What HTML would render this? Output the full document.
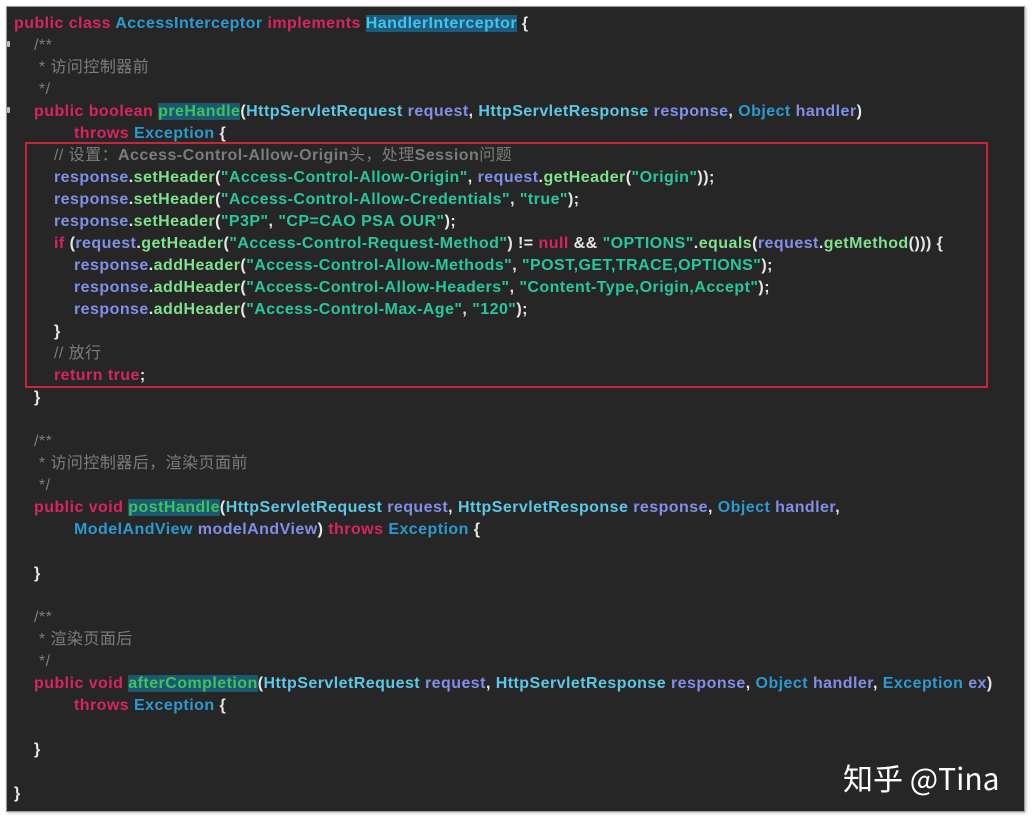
<!DOCTYPE html>
<html><head><meta charset="utf-8"><style>
body{margin:0;background:#fff;width:1036px;height:823px;overflow:hidden;position:relative}
.frame{position:absolute;left:6px;top:6px;width:1017px;height:804px;background:#262626;border:1px solid #9a9a9a;box-shadow:1px 1px 3px #bbb}
.l{position:absolute;white-space:pre;font:bold 16px "Liberation Sans","Noto Sans CJK SC",sans-serif;color:#e6e6e6;height:22px;line-height:22px;letter-spacing:0.45px;margin-top:2px}
.k{color:#d9245f}.t{color:#2a9ad0}.v{color:#8090e8}.m{color:#7ee28e}.s{color:#27c79d}.c{color:#7c7c7c;font-weight:normal}.c b{font-weight:bold}
.h1{background:#1b5c7c;color:#42c3f0}.h2{background:#1c5870;color:#3dc35c}
.box{position:absolute;left:25px;top:142px;width:959px;height:242px;border:2px solid #c8243a}
.dot{position:absolute;left:7px;width:3px;height:6px;background:#bbb;border-radius:1px}
.wm{position:absolute;left:843px;top:757px;font:30px "Noto Sans CJK SC","Liberation Sans",sans-serif;color:#fff;line-height:40px}
</style></head><body>
<div class="frame"></div>
<div class="box"></div>
<div class="dot" style="top:41px"></div><div class="dot" style="top:107px"></div>
<div class="l" style="left:14px;top:11px"><span class="k">public class </span><span class="t">AccessInterceptor </span><span class="k">implements </span><span class="h1">HandlerInterceptor</span> {</div>
<div class="l c" style="left:34px;top:33px">/**</div>
<div class="l c" style="left:34px;top:55px"> * 访问控制器前</div>
<div class="l c" style="left:34px;top:77px"> */</div>
<div class="l" style="left:34px;top:99px"><span class="k">public boolean </span><span class="h2">preHandle</span>(<span class="t" style="color:#5cc8e8">HttpServletRequest </span><span class="v">request</span>, <span class="t" style="color:#5cc8e8">HttpServletResponse </span><span class="v">response</span>, <span class="t">Object </span><span class="v">handler</span>)</div>
<div class="l" style="left:74px;top:121px"><span class="k">throws </span><span class="t">Exception</span> {</div>
<div class="l c" style="left:54px;top:143px">// 设置：<b>Access-Control-Allow-Origin</b>头，处理<b>Session</b>问题</div>
<div class="l" style="left:54px;top:165px"><span class="v">response</span>.<span class="m">setHeader</span>(<span class="s">"Access-Control-Allow-Origin"</span>, <span class="v">request</span>.<span class="m">getHeader</span>(<span class="s">"Origin"</span>));</div>
<div class="l" style="left:54px;top:187px"><span class="v">response</span>.<span class="m">setHeader</span>(<span class="s">"Access-Control-Allow-Credentials"</span>, <span class="s">"true"</span>);</div>
<div class="l" style="left:54px;top:209px"><span class="v">response</span>.<span class="m">setHeader</span>(<span class="s">"P3P"</span>, <span class="s">"CP=CAO PSA OUR"</span>);</div>
<div class="l" style="left:54px;top:231px"><span class="k">if</span> (<span class="v">request</span>.<span class="m">getHeader</span>(<span class="s">"Access-Control-Request-Method"</span>) != <span class="k">null</span> &amp;&amp; <span class="s">"OPTIONS"</span>.<span class="m">equals</span>(<span class="v">request</span>.<span class="m">getMethod</span>())) {</div>
<div class="l" style="left:74px;top:253px"><span class="v">response</span>.<span class="m">addHeader</span>(<span class="s">"Access-Control-Allow-Methods"</span>, <span class="s">"POST,GET,TRACE,OPTIONS"</span>);</div>
<div class="l" style="left:74px;top:275px"><span class="v">response</span>.<span class="m">addHeader</span>(<span class="s">"Access-Control-Allow-Headers"</span>, <span class="s">"Content-Type,Origin,Accept"</span>);</div>
<div class="l" style="left:74px;top:297px"><span class="v">response</span>.<span class="m">addHeader</span>(<span class="s">"Access-Control-Max-Age"</span>, <span class="s">"120"</span>);</div>
<div class="l" style="left:54px;top:319px">}</div>
<div class="l c" style="left:54px;top:341px">// 放行</div>
<div class="l" style="left:54px;top:363px"><span class="k">return true</span>;</div>
<div class="l" style="left:34px;top:385px">}</div>
<div class="l c" style="left:34px;top:429px">/**</div>
<div class="l c" style="left:34px;top:451px"> * 访问控制器后，渲染页面前</div>
<div class="l c" style="left:34px;top:473px"> */</div>
<div class="l" style="left:34px;top:495px"><span class="k">public void </span><span class="h2">postHandle</span>(<span class="t" style="color:#5cc8e8">HttpServletRequest </span><span class="v">request</span>, <span class="t" style="color:#5cc8e8">HttpServletResponse </span><span class="v">response</span>, <span class="t">Object </span><span class="v">handler</span>,</div>
<div class="l" style="left:74px;top:517px"><span class="t">ModelAndView </span><span class="v">modelAndView</span>) <span class="k">throws </span><span class="t">Exception</span> {</div>
<div class="l" style="left:34px;top:561px">}</div>
<div class="l c" style="left:34px;top:605px">/**</div>
<div class="l c" style="left:34px;top:627px"> * 渲染页面后</div>
<div class="l c" style="left:34px;top:649px"> */</div>
<div class="l" style="left:34px;top:671px"><span class="k">public void </span><span class="h2">afterCompletion</span>(<span class="t" style="color:#5cc8e8">HttpServletRequest </span><span class="v">request</span>, <span class="t" style="color:#5cc8e8">HttpServletResponse </span><span class="v">response</span>, <span class="t">Object </span><span class="v">handler</span>, <span class="t">Exception </span><span class="v">ex</span>)</div>
<div class="l" style="left:74px;top:693px"><span class="k">throws </span><span class="t">Exception</span> {</div>
<div class="l" style="left:34px;top:737px">}</div>
<div class="l" style="left:14px;top:781px">}</div>
<div class="wm">知乎 @Tina</div>
</body></html>
